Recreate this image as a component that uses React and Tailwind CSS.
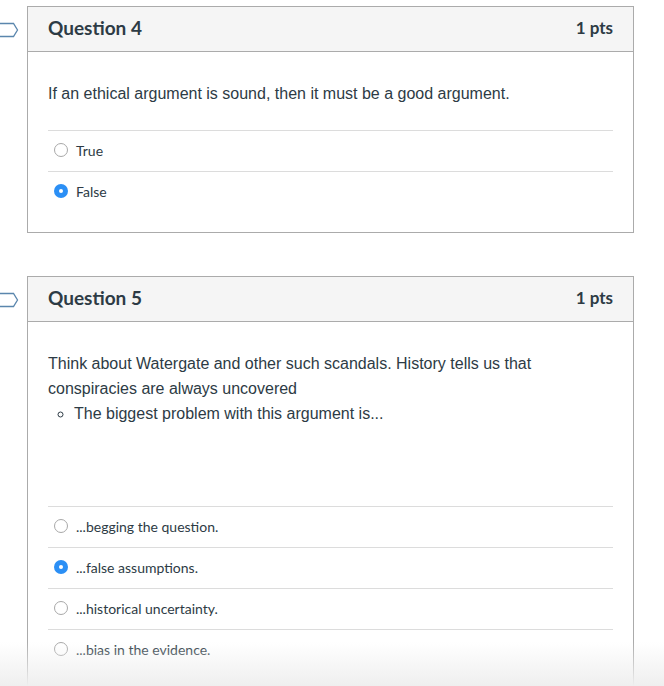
import React from 'react';

const textColor = 'text-[#2d3b45]';

function Flag() {
  return (
    <svg width="20" height="16" viewBox="0 0 20 16" className="block">
      <path d="M-4 1.5 H13.5 L17.5 8 L13.5 14.5 H-4" fill="none" stroke="#5a86ad" strokeWidth="1.3" />
    </svg>
  );
}

function Radio({ checked }) {
  if (checked) {
    return (
      <span className="flex h-[14px] w-[14px] shrink-0 items-center justify-center rounded-full bg-[#2b8ff5]">
        <span className="h-[4px] w-[4px] rounded-full bg-white" />
      </span>
    );
  }
  return <span className="h-[14px] w-[14px] shrink-0 rounded-full border border-[#a8a8a8] bg-white" />;
}

function Answers({ options }) {
  return (
    <div>
      {options.map((o) => (
        <div key={o.label} className="flex h-[41px] items-center gap-[8px] border-t border-[#dcdcdc] pb-[2px] pl-[6px]">
          <Radio checked={o.checked} />
          <span className={`font-['Lato',sans-serif] text-[14px] ${textColor}`}>{o.label}</span>
        </div>
      ))}
    </div>
  );
}

function QuestionCard({ number, children }) {
  return (
    <div className="flex">
      <div className="w-[27px] shrink-0 pt-[16px]">
        <Flag />
      </div>
      <div className="w-[607px] border border-[#ababab] bg-white">
        <div className="flex h-[45px] items-center justify-between border-b border-[#ababab] bg-[#f5f5f5] px-[20px] pb-[2px] font-['Lato',sans-serif] font-bold">
          <span className={`text-[19px] ${textColor}`}>Question {number}</span>
          <span className={`text-[17px] ${textColor}`}>1 pts</span>
        </div>
        <div className="px-[20px]">{children}</div>
      </div>
    </div>
  );
}

export default function App() {
  return (
    <div className="relative h-[686px] overflow-hidden bg-white pt-[6px] font-['Liberation_Sans',Arial,sans-serif]">
      <QuestionCard number={4}>
        <p className={`pt-[29px] text-[16px] leading-[25px] ${textColor}`}>
          If an ethical argument is sound, then it must be a good argument.
        </p>
        <div className="pt-[24px] pb-[20px]">
          <Answers options={[{ label: 'True' }, { label: 'False', checked: true }]} />
        </div>
      </QuestionCard>

      <div className="h-[43px]" />

      <QuestionCard number={5}>
        <div className={`pt-[29px] text-[16px] leading-[25px] ${textColor}`}>
          <p>
            Think about Watergate and other such scandals. History tells us that conspiracies are always uncovered
          </p>
          <ul className="list-[circle] pl-[26px]">
            <li>The biggest problem with this argument is...</li>
          </ul>
        </div>
        <div className="pt-[80px] pb-[20px]">
          <Answers
            options={[
              { label: '...begging the question.' },
              { label: '...false assumptions.', checked: true },
              { label: '...historical uncertainty.' },
              { label: '...bias in the evidence.' },
            ]}
          />
        </div>
      </QuestionCard>

      <div className="pointer-events-none absolute inset-x-0 bottom-0 h-[44px] bg-gradient-to-b from-white/0 to-[#efefef]" />
    </div>
  );
}
